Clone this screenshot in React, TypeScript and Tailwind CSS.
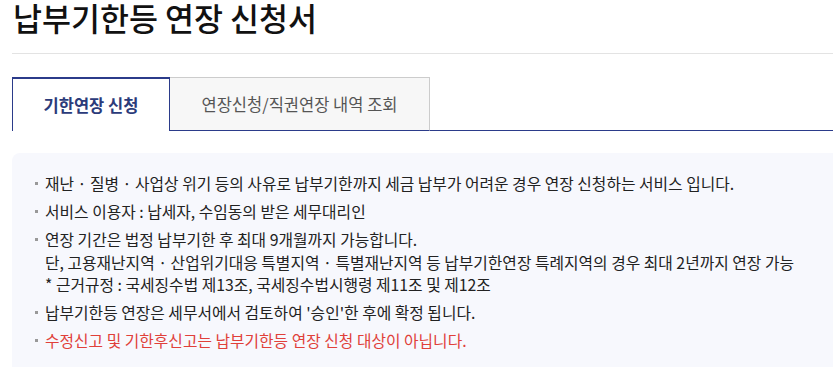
const items = [
  {
    lines: [
      "재난 · 질병 · 사업상 위기 등의 사유로 납부기한까지 세금 납부가 어려운 경우 연장 신청하는 서비스 입니다.",
    ],
  },
  { lines: ["서비스 이용자 : 납세자, 수임동의 받은 세무대리인"] },
  {
    lines: [
      "연장 기간은 법정 납부기한 후 최대 9개월까지 가능합니다.",
      "단, 고용재난지역 · 산업위기대응 특별지역 · 특별재난지역 등 납부기한연장 특례지역의 경우 최대 2년까지 연장 가능",
      "* 근거규정 : 국세징수법 제13조, 국세징수법시행령 제11조 및 제12조",
    ],
  },
  { lines: ["납부기한등 연장은 세무서에서 검토하여 '승인'한 후에 확정 됩니다."] },
  {
    lines: ["수정신고 및 기한후신고는 납부기한등 연장 신청 대상이 아닙니다."],
    red: true,
  },
];

export default function App() {
  return (
    <div
      className="h-[367px] w-[833px] overflow-hidden bg-white pl-3"
      style={{ fontFamily: '"Noto Sans CJK KR", "Noto Sans", sans-serif' }}
    >
      {/* 제목 */}
      <h1 className="pl-px text-[31.5px] leading-[34px] font-medium text-[#111]">
        납부기한등 연장 신청서
      </h1>
      <div className="mt-[19px] h-px bg-[#e3e3e3]"></div>

      {/* 탭 */}
      <div className="mt-[23px] flex h-[54px]">
        <div className="flex w-[158px] items-center justify-center border-x border-t-2 border-[#2b3b8a] bg-white text-[16.5px] font-bold text-[#2b3b7a]">
          기한연장 신청
        </div>
        <div className="flex w-[260px] items-center justify-center border-t border-r border-b border-t-[#cccccc] border-r-[#cccccc] border-b-[#2b3b8a] bg-[#f7f7f7] text-[16.5px] text-[#555]">
          연장신청/직권연장 내역 조회
        </div>
        <div className="flex-1 border-b border-[#2b3b8a]"></div>
      </div>

      {/* 안내 */}
      <div className="mt-[22px] h-[220px] rounded-tl-lg bg-[#f7f8fd] pt-5 pl-[21px]">
        <ul className="flex flex-col gap-[5.5px]">
          {items.map((item, i) => (
            <li
              key={i}
              className={`relative pl-3 text-[15.8px] leading-[22.5px] ${
                item.red ? "text-[#e0403a]" : "text-[#222]"
              }`}
            >
              <span className="absolute top-[9px] left-[2px] h-[3px] w-[3px] bg-[#999]"></span>
              {item.lines.map((line, j) => (
                <div key={j}>{line}</div>
              ))}
            </li>
          ))}
        </ul>
      </div>
    </div>
  );
}
